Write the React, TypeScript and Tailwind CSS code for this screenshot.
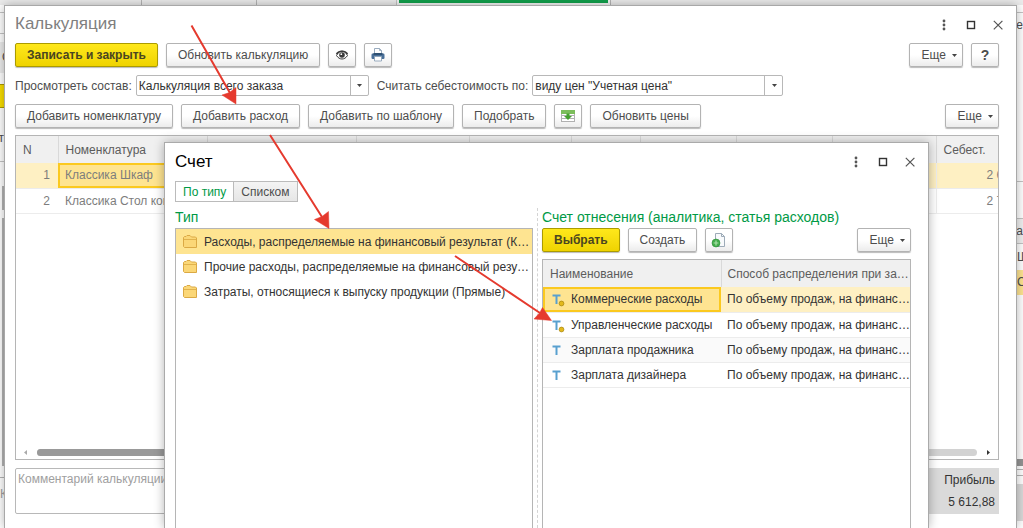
import type { ReactNode } from "react";
import clsx from "clsx";

const itemColumns = [
  { title: "N", width: "w-[42px]" },
  { title: "Номенклатура", width: "w-[149px]" },
  { title: "", width: "w-[149px]" },
  { title: "", width: "w-[113px]" },
  { title: "", width: "" },
  { title: "", width: "w-[69px]" },
  { title: "", width: "w-[96px]" },
  { title: "", width: "w-[96px]" },
  { title: "", width: "w-[104px]" },
  { title: "Себест.", width: "w-[62px]" },
];

const items = [
  { name: "Классика Шкаф", cost: "2 652,00" },
  { name: "Классика Стол компьютерный", cost: "2 735,12" },
];

const expenseTypes = [
  "Расходы, распределяемые на финансовый результат (Косвенные)",
  "Прочие расходы, распределяемые на финансовый результат",
  "Затраты, относящиеся к выпуску продукции (Прямые)",
];

const accounts = [
  { name: "Коммерческие расходы", predefined: true },
  { name: "Управленческие расходы", predefined: true },
  { name: "Зарплата продажника", predefined: false },
  { name: "Зарплата дизайнера", predefined: false },
];

type ButtonProps = {
  children: ReactNode;
  primary?: boolean;
  icon?: boolean;
  label?: string;
};

const buttonBase =
  "flex h-6 shrink-0 cursor-pointer items-center justify-center whitespace-nowrap rounded-xs border shadow-[0_1px_1px_#bbb]";
const buttonPlain = "border-[#b3b3b3] bg-gradient-to-b from-white from-50% to-[#ececec] text-[#4d4d4d]";
const buttonPrimary =
  "border-[#ab9b00] bg-gradient-to-b from-[#ffe81a] to-[#efd300] font-bold text-[#4a4520]";

const Button = ({ children, primary, icon, label }: ButtonProps) => (
  <button
    type="button"
    aria-label={label}
    className={clsx(buttonBase, icon ? "w-7" : "px-[11px]", primary ? buttonPrimary : buttonPlain)}
  >
    {children}
  </button>
);

const Caret = () => (
  <svg className="h-[3px] w-[5px]" viewBox="0 0 5 3" fill="#444">
    <path d="M0 0h5L2.5 3z" />
  </svg>
);

const MoreButton = () => (
  <button type="button" className={clsx(buttonBase, buttonPlain, "gap-[6px] pl-3 pr-[5px]")}>
    Еще
    <Caret />
  </button>
);

const Combo = ({ id, value, width }: { id: string; value: string; width: string }) => (
  <div className={clsx("relative h-[21px]", width)}>
    <select
      id={id}
      className="h-full w-full appearance-none rounded-xs border border-[#b8b8b8] bg-white pl-[2px] text-[#333]"
    >
      <option>{value}</option>
    </select>
    <div className="pointer-events-none absolute inset-y-0 right-0 flex w-[19px] items-center justify-center border-l border-[#b8b8b8]">
      <Caret />
    </div>
  </div>
);

const WindowControls = () => (
  <div className="-mr-[5px] flex items-center gap-[15px]">
    <button type="button" aria-label="Меню" className="cursor-pointer">
      <svg className="size-3" viewBox="0 0 12 12" fill="#555">
        <circle cx="6" cy="2" r="1.4" />
        <circle cx="6" cy="6" r="1.4" />
        <circle cx="6" cy="10" r="1.4" />
      </svg>
    </button>
    <button type="button" aria-label="Развернуть" className="cursor-pointer">
      <svg className="size-3" viewBox="0 0 12 12" fill="none" stroke="#333" strokeWidth="1.4">
        <rect x="2.5" y="2.5" width="7" height="7" />
      </svg>
    </button>
    <button type="button" aria-label="Закрыть" className="cursor-pointer">
      <svg className="size-3" viewBox="0 0 12 12" stroke="#555" strokeWidth="1.2">
        <path d="M1.8 1.8l8.6 8.6M10.4 1.8L1.8 10.4" />
      </svg>
    </button>
  </div>
);

const EyeIcon = () => (
  <svg className="h-3 w-4" viewBox="0 0 16 12" fill="none" stroke="#3a3a3a">
    <path d="M2.5 6.5C4 3.3 6 2.2 8 2.2s4 1.1 5.5 4.3C12 9 10 10 8 10S4 9 2.5 6.5z" strokeWidth="1" />
    <path d="M2.5 5C5 1.3 11 1.3 13.5 5" strokeWidth="1.6" />
    <circle cx="8" cy="6" r="2.8" fill="#3a3a3a" stroke="none" />
    <circle cx="7.3" cy="5.2" r="0.9" fill="#fff" stroke="none" />
  </svg>
);

const PrinterIcon = () => (
  <svg className="size-4" viewBox="0 0 16 16">
    <path d="M4.5 7V1.5h5l2 2V7z" fill="#fff" stroke="#8fa3b8" strokeWidth="0.9" />
    <path d="M9.5 1.5v2h2" fill="none" stroke="#8fa3b8" strokeWidth="0.8" />
    <rect x="1.5" y="6.5" width="13" height="5.5" rx="1.2" fill="#4a7099" />
    <rect x="3.5" y="6" width="9" height="2" fill="#2f5173" />
    <path d="M4.5 9.5h7V14h-7z" fill="#fff" stroke="#8fa3b8" strokeWidth="0.9" />
  </svg>
);

const FillTableIcon = () => (
  <svg className="h-3 w-[14px]" viewBox="0 0 14 12">
    <rect x="0.5" y="0.5" width="13" height="11" fill="#fff" stroke="#b0b0b0" />
    <path d="M0 5.5h14M0 8.5h14" stroke="#b0b0b0" />
    <rect width="14" height="4" fill="#7cbd5c" />
    <path d="M5.5 3.5h3V6H11l-4 4-4-4h2.5z" fill="#45a12f" />
  </svg>
);

const AddDocumentIcon = () => (
  <svg className="size-4" viewBox="0 0 16 16">
    <path d="M4.5 1.5h6l3 3v10h-9z" fill="#f8fafc" stroke="#9dabb8" />
    <path d="M10.5 1.5v3h3" fill="none" stroke="#9dabb8" />
    <circle cx="5" cy="11" r="4" fill="#43ad4b" stroke="#2c8f38" strokeWidth="0.6" />
    <path d="M5 8.6v4.8M2.6 11h4.8" stroke="#a9e0a8" strokeWidth="1.2" />
  </svg>
);

const FolderIcon = () => (
  <svg className="h-[13px] w-[14px] shrink-0" viewBox="0 0 14 13">
    <path
      d="M0.5 11.5V2.5L1.5 1.5H3L4 0.5H7L8.5 2H12.5L13.5 3V12.5H1.5z"
      fill="#fbd777"
      stroke="#dba944"
    />
    <path d="M1 4.5h12" stroke="#dba944" strokeWidth="0.8" />
  </svg>
);

// "T" marks an item, the dot marks a predefined one
const AccountIcon = ({ predefined }: { predefined: boolean }) => (
  <svg className="h-4 w-[14px] shrink-0" viewBox="0 0 14 16">
    <path d="M1.5 4.500h8M5.5 4v9" stroke="#58a0cf" strokeWidth="2" fill="none" />
    {predefined && <circle cx="10.5" cy="12.5" r="2.4" fill="#e3b91c" stroke="#a5830a" strokeWidth="0.7" />}
  </svg>
);

const BackgroundLeft = () => (
  <div className="w-1 shrink-0 overflow-hidden whitespace-nowrap bg-white pt-[7px]">
    <div className="h-[22px] border-y border-[#c4c4c4]" />
    <div className="mt-2 h-[31px] bg-[#ececec] pl-[2px] leading-[31px]">С</div>
    <div className="mt-[11px] h-6 border-y border-[#ab9b00] bg-[#f9de00]" />
    <div className="mt-[22px] flex h-8 justify-end border-b border-[#c4c4c4]">От</div>
    <div className="ml-[2px] mt-[24px] h-6 border border-[#b3b3b3] bg-[#ececec]" />
    <div className="ml-[2px] mt-[8px] h-[248px] border border-[#b3b3b3] pt-[50px]">
      <div className="h-6 bg-[#fdf0c4]" />
    </div>
    <div className="mt-1 h-2 border-b border-[#b3b3b3]" />
    <div className="pt-2 text-[#a0a0a0]">К</div>
  </div>
);

const BackgroundRight = () => (
  <div className="w-1.5 shrink-0 overflow-hidden whitespace-nowrap bg-white pt-[7px]">
    <div className="flex h-[170px] justify-end border-y border-[#c4c4c4] pt-1">де</div>
    <div className="mt-[36px] flex h-[26px] justify-end border-y border-[#c4c4c4] bg-[#f0f0f0] leading-6">
      ка
    </div>
    <div className="h-[26px] leading-[26px]">Ш</div>
    <div className="h-[25px] bg-[#fee491] leading-[25px]">С</div>
    <div className="mt-[164px] h-[7px] bg-[#949494]" />
    <div className="mt-[3px] h-[7px] border-y border-[#b3b3b3]" />
    <div className="mt-2 h-[37px] bg-[#dadada]" />
  </div>
);

const ItemsTable = () => (
  <div className="flex h-[325px] flex-col justify-between overflow-hidden border border-[#b5b5b5]">
    <table className="w-full table-fixed border-collapse text-left text-[#7d7d7d]">
      <thead>
        <tr className="h-[27px] bg-[#f0f0f0] text-[#5c5c5c]">
          {itemColumns.map((column, index) => (
            <th
              key={index}
              className={clsx("border-r border-[#d9d9d9] pl-[7px] font-normal last:border-r-0", column.width)}
            >
              {column.title}
            </th>
          ))}
        </tr>
      </thead>
      <tbody>
        {items.map((item, index) => (
          <tr
            key={item.name}
            className={clsx("h-[25px] border-b border-[#ececec]", index === 0 && "bg-[#fef0c3]")}
          >
            <td className="pr-2 text-right">{index + 1}</td>
            <td
              className={clsx(
                "overflow-hidden whitespace-nowrap pl-[7px]",
                index === 0 && "bg-[#fee491] outline-2 -outline-offset-2 outline-[#fbc91f]"
              )}
            >
              {item.name}
            </td>
            <td colSpan={7} className="border-r border-[#ececec]" />
            <td className="overflow-hidden whitespace-nowrap pl-[50px]">{item.cost}</td>
          </tr>
        ))}
      </tbody>
    </table>
    <div className="flex items-center gap-[10px] px-2 pb-[3px]">
      <svg className="h-[5px] w-[3px]" viewBox="0 0 3 5" fill="#aaa">
        <path d="M3 0v5L0 2.5z" />
      </svg>
      <div className="h-[7px] flex-1 rounded-full bg-[#d2d2d2]">
        <div className="h-full w-2/3 rounded-full bg-[#999]" />
      </div>
      <svg className="h-[5px] w-[3px]" viewBox="0 0 3 5" fill="#333">
        <path d="M0 0v5l3-2.5z" />
      </svg>
    </div>
  </div>
);

const AccountDialog = () => (
  <section className="absolute bottom-0 left-[159px] right-[87px] top-[136px] flex flex-col border border-b-0 border-[#aaa] bg-white pl-[10px] pr-[17px] shadow-[0_0_10px_rgba(0,0,0,0.3)]">
    <header className="flex h-[38px] items-center justify-between">
      <h2 className="text-[17px] text-black">Счет</h2>
      <WindowControls />
    </header>
    <div className="flex h-[21px]">
      <button type="button" className="cursor-pointer border border-[#bbb] px-[7px] text-[#009a46]">
        По типу
      </button>
      <button
        type="button"
        className="cursor-pointer border border-l-0 border-[#bbb] bg-gradient-to-b from-[#f4f4f4] to-[#e6e6e6] px-[7px] text-[#4d4d4d]"
      >
        Списком
      </button>
    </div>

    <div className="flex min-h-0 flex-1 pt-[6px]">
      <div className="flex min-w-0 flex-[359] flex-col">
        <h3 className="h-5 text-sm leading-[18px] text-[#009a46]">Тип</h3>
        <ul className="flex-1 border border-b-0 border-[#b5b5b5] text-[#333]">
          {expenseTypes.map((type, index) => (
            <li
              key={type}
              className={clsx("flex h-[25px] items-center gap-[7px] pl-[7px]", index === 0 && "bg-[#fee491]")}
            >
              <FolderIcon />
              <span className="truncate">{type}</span>
            </li>
          ))}
        </ul>
      </div>
      <div className="mx-1 border-l border-dashed border-[#d4d4d4]" />
      <div className="flex min-w-0 flex-[370] flex-col">
        <h3 className="h-5 whitespace-nowrap text-sm leading-[18px] text-[#009a46]">
          Счет отнесения (аналитика, статья расходов)
        </h3>
        <div className="flex gap-2">
          <Button primary>Выбрать</Button>
          <Button>Создать</Button>
          <Button icon label="Создать копированием">
            <AddDocumentIcon />
          </Button>
          <div className="ml-auto">
            <MoreButton />
          </div>
        </div>
        <div className="mt-[7px] flex-1 border border-b-0 border-[#b5b5b5]">
          <table className="w-full table-fixed border-collapse text-left text-[#333]">
            <thead>
              <tr className="h-[27px] bg-[#f0f0f0] text-[#5c5c5c]">
                <th className="w-[178px] border-r border-[#d9d9d9] pl-[7px] font-normal">Наименование</th>
                <th className="truncate pl-[6px] font-normal">Способ распределения при закрытии</th>
              </tr>
            </thead>
            <tbody>
              {accounts.map((account, index) => (
                <tr
                  key={account.name}
                  className={clsx(
                    "h-[25px] border-b border-[#ececec]",
                    index === 0 && "bg-[#fef0c3]",
                    index === 2 && "bg-[#fafafa]"
                  )}
                >
                  <td
                    className={clsx(
                      "pl-2",
                      index === 0 && "bg-[#fee491] outline-2 -outline-offset-2 outline-[#fbc91f]"
                    )}
                  >
                    <div className="flex items-center gap-[6px] whitespace-nowrap">
                      <AccountIcon predefined={account.predefined} />
                      {account.name}
                    </div>
                  </td>
                  <td className="truncate pl-[6px]">По объему продаж, на финансовый результат</td>
                </tr>
              ))}
            </tbody>
          </table>
        </div>
      </div>
    </div>
  </section>
);

const Arrows = () => (
  <svg className="pointer-events-none absolute inset-0 h-full w-full" fill="#e53a2e" stroke="#e53a2e">
    <path d="M191.5 25.5L230 93M270 135L322 217M455 256L540 313" strokeWidth="2" />
    <path
      d="M236 104L222 95L229.5 92.5L236 87.5zM329 228.5L314.5 219.5L322 216.5L328.5 211.5zM551.5 320.5L534 319L539.5 313L542.5 307.5z"
      strokeWidth="0.5"
    />
  </svg>
);

const App = () => {
  return (
    <div className="relative flex h-screen flex-col overflow-hidden bg-white font-['Liberation_Sans',Arial,sans-serif] text-xs text-[#4d4d4d]">
      {/* Tabs of the main window */}
      <div className="flex h-[5px] shrink-0 bg-[#ececec]">
        <div className="w-[142px] border-r border-[#b5b5b5]" />
        <div className="w-[115px] border-r border-[#b5b5b5]" />
        <div className="w-[140px] border-r border-[#c4c4c4]" />
        <div className="w-[214px] border-r border-[#b5b5b5] bg-[#f5f5f5] px-[2px]">
          <div className="h-[3px] bg-[#12a04c]" />
        </div>
      </div>

      <div className="flex min-h-0 flex-1">
        <BackgroundLeft />

        <main className="relative flex min-w-0 flex-1 flex-col border border-b-0 border-[#a8a8a8] bg-white pl-[10px] pr-[17px] shadow-[0_0_10px_rgba(0,0,0,0.3)]">
          <header className="flex h-[37px] items-center justify-between">
            <h1 className="text-[17px] text-[#808080]">Калькуляция</h1>
            <WindowControls />
          </header>

          <div className="flex gap-2">
            <Button primary>Записать и закрыть</Button>
            <Button>Обновить калькуляцию</Button>
            <Button icon label="Просмотр">
              <EyeIcon />
            </Button>
            <Button icon label="Печать">
              <PrinterIcon />
            </Button>
            <div className="ml-auto flex gap-2">
              <MoreButton />
              <Button icon label="Справка">
                <span className="text-sm font-bold">?</span>
              </Button>
            </div>
          </div>

          <div className="flex items-center gap-1 whitespace-nowrap py-2">
            <label htmlFor="content">Просмотреть состав:</label>
            <Combo id="content" value="Калькуляция всего заказа" width="w-[233px]" />
            <label htmlFor="cost" className="pl-1">
              Считать себестоимость по:
            </label>
            <Combo id="cost" value={'виду цен "Учетная цена"'} width="w-[251px]" />
          </div>

          <div className="flex gap-2">
            <Button>Добавить номенклатуру</Button>
            <Button>Добавить расход</Button>
            <Button>Добавить по шаблону</Button>
            <Button>Подобрать</Button>
            <Button icon label="Заполнить">
              <FillTableIcon />
            </Button>
            <Button>Обновить цены</Button>
            <div className="ml-auto">
              <MoreButton />
            </div>
          </div>

          <div className="pt-[7px]">
            <ItemsTable />
          </div>

          <div className="flex h-[54px] shrink-0 pt-2">
            <textarea
              aria-label="Комментарий калькуляции"
              placeholder="Комментарий калькуляции"
              className="flex-1 resize-none rounded-xs border border-[#b8b8b8] px-[2px] py-[2px] placeholder:text-[#a0a0a0]"
            />
            <div className="ml-2 flex w-[200px] flex-col justify-center gap-[6px] bg-[#dadada] pr-1 text-right text-[#333]">
              <span>Прибыль</span>
              <span>5 612,88</span>
            </div>
          </div>

          <AccountDialog />
        </main>

        <BackgroundRight />
      </div>

      <Arrows />
    </div>
  );
};

export default App;
